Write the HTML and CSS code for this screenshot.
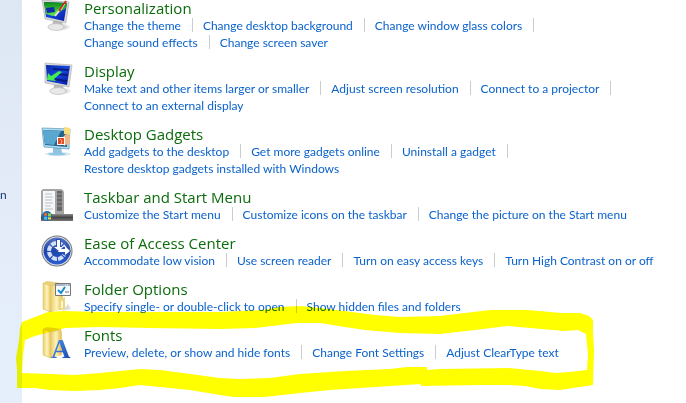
FILE: index.html
```html
<!DOCTYPE html>
<html lang="en">
<head>
<meta charset="utf-8">
<title>Control Panel</title>
<link rel="stylesheet" href="styles.css">
</head>
<body>
<div class="page">
<aside class="side"><span>n</span></aside>
<main class="main">
  <section class="item">
    <svg class="icon" viewBox="0 0 32 32" aria-hidden="true">
      <defs>
        <linearGradient id="frame" x2="1" y2="1"><stop stop-color="#999"/><stop offset=".5" stop-color="#eee"/><stop offset="1" stop-color="#aaa"/></linearGradient>
        <linearGradient id="screen" x2="1" y2="1"><stop stop-color="#0828a8"/><stop offset=".5" stop-color="#1647dc"/><stop offset="1" stop-color="#0516a0"/></linearGradient>
        <linearGradient id="grass" x2="0" y2="1"><stop stop-color="#0a8b12"/><stop offset="1" stop-color="#5fe05a"/></linearGradient>
        <linearGradient id="fold" x2="1"><stop stop-color="#e9cf70"/><stop offset=".5" stop-color="#fff3b8"/><stop offset="1" stop-color="#e3c35c"/></linearGradient>
        <radialGradient id="foot"><stop stop-color="#aaa"/><stop offset=".6" stop-color="#ddd"/><stop offset="1" stop-color="#ddd" stop-opacity="0"/></radialGradient>
      </defs>
      <ellipse cx="18" cy="27" rx="12" ry="4" fill="url(#foot)"/>
      <path d="M12 21h9l1 5-11 1z" fill="#b9b9b9"/><ellipse cx="15" cy="27" rx="8" ry="3.4" fill="#e8e8e8" stroke="#b5b5b5" stroke-width=".6"/>
      <path d="M1 0l27 2-3 21L4 19z" fill="#d9d9d9" stroke="#aaa" stroke-width=".6"/>
      <path d="M3 2l23 1-3 18L5 17z" fill="url(#screen)"/>
      <path d="M3 2l23 1-1 5-8 5-5 3-7-2z" fill="url(#grass)"/>
      <path d="M5 8l8-1 1 5-8 1z" fill="#102ca8"/><path d="M8 14l5-1 4-4 2 2-5 5z" fill="#55e04c"/>
      <path d="M25 1L18 11" stroke="#d9261c" stroke-width="2"/><path d="M18 11l-4 5" stroke="#f5ddd4" stroke-width="2"/><path d="M24 4l-4 6" stroke="#fff" stroke-width=".7"/>
    </svg>
    <div class="body">
      <h2><a href="#">Personalization</a></h2>
      <ul><li><a href="#">Change the theme</a></li><li><a href="#">Change desktop background</a></li><li><a href="#">Change window glass colors</a></li><li><a href="#">Change sound effects</a></li><li><a href="#">Change screen saver</a></li></ul>
    </div>
  </section>
  <section class="item">
    <svg class="icon" viewBox="0 0 32 32" aria-hidden="true">
      <ellipse cx="19" cy="28" rx="12" ry="4" fill="url(#foot)"/>
      <path d="M13 22h9l1 5-11 1z" fill="#b9b9b9"/><ellipse cx="17" cy="28" rx="8" ry="3.4" fill="#e8e8e8" stroke="#b5b5b5" stroke-width=".6"/>
      <path d="M4 0l27 2-3 22L4 20z" fill="#d9d9d9" stroke="#aaa" stroke-width=".6"/>
      <path d="M5 2l24 1-3 19L6 18z" fill="url(#screen)"/>
      <path d="M12 6l16 1M14 11l13 1M12 16l14 2" stroke="#06106a" stroke-width="2" opacity=".75"/>
      <path d="M18 8l3 1-8 7 2 2-9-1 1-7 3 3z" fill="#45eb52"/>
    </svg>
    <div class="body">
      <h2><a href="#">Display</a></h2>
      <ul><li><a href="#">Make text and other items larger or smaller</a></li><li><a href="#">Adjust screen resolution</a></li><li><a href="#">Connect to a projector</a></li><li><a href="#">Connect to an external display</a></li></ul>
    </div>
  </section>
  <section class="item">
    <svg class="icon" viewBox="0 0 32 32" aria-hidden="true">
      <ellipse cx="17" cy="28" rx="13" ry="2" fill="#d9e9f2"/>
      <path d="M12 21h8l1 6h-9z" fill="#8fc3e0"/><ellipse cx="16" cy="28" rx="9" ry="1.4" fill="#8fc6e3"/>
      <path d="M1 2l28 1-1 20-25-2z" fill="#b2dcf2" stroke="#5896b8" stroke-width=".7"/>
      <path d="M2 4l25 1-1 16-22-2z" fill="#26638a"/><path d="M2 4l18 1-7 14-9-1z" fill="#5aa7cf"/>
      <path d="M23 1l6 1v7l-6-1z" fill="#f7dc7a"/><path d="M21 12l4-4 4 2v7l-6 3z" fill="#efb68a"/>
      <path d="M16 11h8v8h-8z" fill="#fff"/><path d="M17 12h6v6h-6z" fill="#e64a27"/><path d="M19 13l2 2-1 3" stroke="#ffad8d" fill="none"/>
    </svg>
    <div class="body">
      <h2><a href="#">Desktop Gadgets</a></h2>
      <ul><li><a href="#">Add gadgets to the desktop</a></li><li><a href="#">Get more gadgets online</a></li><li><a href="#">Uninstall a gadget</a></li><li><a href="#">Restore desktop gadgets installed with Windows</a></li></ul>
    </div>
  </section>
  <section class="item">
    <svg class="icon" viewBox="0 0 32 32" aria-hidden="true">
      <defs><linearGradient id="bar" x2="0" y2="1"><stop stop-color="#8b8b8b"/><stop offset=".5" stop-color="#474747"/><stop offset="1" stop-color="#777"/></linearGradient></defs>
      <path d="M2 0h18q3 1 3 4v21H0V2z" fill="#a5a5a5"/><path d="M2 2h12v23H2z" fill="#f7f7f7"/>
      <path d="M4 5h7M4 8h8M4 11h7M4 14h8M4 17h6M4 20h8" stroke="#b7c0ce"/><path d="M16 2h5v20h-5z" fill="#666"/><path d="M16 5h5M16 9h5M16 13h5M16 17h5" stroke="#999"/>
      <path d="M0 25h32v7H0z" fill="url(#bar)"/><circle cx="6" cy="27" r="5" fill="#1c6fa9"/>
      <path d="M3 25q1-2 3-1v3q-2-1-3 0z" fill="#f06425"/><path d="M7 24q2 1 3 0v3q-2 1-3 0z" fill="#8fd34a"/><path d="M3 28q2-1 3 0v3q-2 0-3-1z" fill="#52b8f2"/><path d="M7 28q2 1 3 0v2q-2 1-3 0z" fill="#ffd744"/>
    </svg>
    <div class="body">
      <h2><a href="#">Taskbar and Start Menu</a></h2>
      <ul><li><a href="#">Customize the Start menu</a></li><li><a href="#">Customize icons on the taskbar</a></li><li><a href="#">Change the picture on the Start menu</a></li></ul>
    </div>
  </section>
  <section class="item">
    <svg class="icon" viewBox="0 0 32 32" aria-hidden="true">
      <defs><linearGradient id="ball" x2="0" y2="1"><stop stop-color="#5573bd"/><stop offset=".5" stop-color="#1c45ac"/><stop offset="1" stop-color="#2c5ccf"/></linearGradient></defs>
      <circle cx="16" cy="16" r="15.500" fill="#777"/><circle cx="16" cy="16" r="14.500" fill="#dde2ee"/><circle cx="16" cy="16" r="13.500" fill="url(#ball)"/>
      <circle cx="16" cy="16" r="8" fill="none" stroke="#d5e0f6" stroke-width="4" stroke-dasharray="5.083 1.200"/>
      <path d="M15 16V4h5v8h5l5 4-5 5z" fill="#2a52b3"/>
      <path d="M16 5h3v7h3l-4 4-5-4h3z" fill="#fff"/><path d="M19 14h5v-3l5 5-5 4v-3h-7z" fill="#fff"/>
    </svg>
    <div class="body">
      <h2><a href="#">Ease of Access Center</a></h2>
      <ul><li><a href="#">Accommodate low vision</a></li><li><a href="#">Use screen reader</a></li><li><a href="#">Turn on easy access keys</a></li><li><a href="#">Turn High Contrast on or off</a></li></ul>
    </div>
  </section>
  <section class="item">
    <svg class="icon" viewBox="0 0 32 32" aria-hidden="true">
      <path d="M21 30l9-2-3-5z" fill="#c7c7c7" opacity=".6"/><path d="M2 2l4-2 14 2 2 4v22l-13 3-7-3z" fill="#e8cf79"/><path d="M2 2l8 3v26l-8-3z" fill="url(#fold)" stroke="#d8bd61" stroke-width=".5"/><path d="M10 6l11-3v25l-11 3z" fill="url(#fold)"/><path d="M18 18l6-2v12l-6 1z" fill="#ecd67f"/><path d="M20 20h2v7h-2z" fill="#fff8d3"/>
      <path d="M14.500 2.500h15v12h-15z" fill="#f7fbff" stroke="#777"/><path d="M15 3h14v2H15z" fill="#a8b6c5"/><path d="M24 4h1M26 4h1" stroke="#fff"/><path d="M17 9l3 3 4-6" fill="none" stroke="#1689cf" stroke-width="2"/><path d="M24 11h4" stroke="#777"/>
    </svg>
    <div class="body">
      <h2><a href="#">Folder Options</a></h2>
      <ul><li><a href="#">Specify single- or double-click to open</a></li><li><a href="#">Show hidden files and folders</a></li></ul>
    </div>
  </section>
  <section class="item">
    <svg class="icon" viewBox="0 0 32 32" aria-hidden="true">
      <defs><linearGradient id="letter" x2="1" y2="1"><stop stop-color="#5aa2ee"/><stop offset="1" stop-color="#123fac"/></linearGradient></defs>
      <path d="M2 2l4-2 14 2 1 4v22l-12 3-7-3z" fill="#e8cf79"/><path d="M2 2l8 3v26l-8-3z" fill="url(#fold)" stroke="#d8bd61" stroke-width=".5"/><path d="M10 6l10-3v25l-10 3z" fill="url(#fold)"/>
      <text x="10" y="31" class="letter">A</text>
    </svg>
    <div class="body">
      <h2><a href="#">Fonts</a></h2>
      <ul><li><a href="#">Preview, delete, or show and hide fonts</a></li><li><a href="#">Change Font Settings</a></li><li><a href="#">Adjust ClearType text</a></li></ul>
    </div>
  </section>
</main>
<svg class="marker" width="600" height="403" viewBox="0 0 600 403" aria-hidden="true">
  <path fill="#ff0" fill-rule="evenodd" d="M17 388V370L16 358 19 340 20 328 22 322 35 317 48 312 63 311 100 312 220 312 263 310 280 307 300 306 320 308 352 312 375 315 400 317 440 316 465 313 490 310 527 310 562 313 580 313 589 316 593 320V332L594 350 593 385 573 388 560 390 540 389 525 386 507 385 480 385 421 386V384L360 388 330 390 300 393 265 397H234L220 395 190 390 160 387 140 385 120 388 100 390 75 391 50 390 35 388ZM22 373L23 355 25 340 35 336 50 332 65 328 100 327 150 328 220 329 255 328 280 325 297 323 320 323 345 327 365 330 400 333 440 334 475 330 507 326 530 328 565 331 578 330 586 334 588 355 587 370 570 372 555 373 540 371 509 368 440 369 427 370V367H407L390 369 345 371 300 374 270 378 240 379 220 378 190 374 160 370 140 369 120 371 100 373 75 375 50 374Z"/>
</svg>
</div>
</body>
</html>
```
FILE: styles.css
```css
* { box-sizing: border-box; }
body {
  margin: 0;
  background: #fff;
  font-family: Lato, "Open Sans", sans-serif;
  font-size: 12px;
  line-height: 17px;
}
.page {
  position: relative;
  display: flex;
  min-height: 100vh;
  overflow: hidden;
}
.side {
  flex: none;
  width: 22px;
  padding-top: 186px;
  color: #153a7a;
  background: linear-gradient(#dde7f4, #e4ebf8 50%, #e5effc);
}
.main {
  flex: 1;
  display: flex;
  flex-direction: column;
  gap: 12px;
  padding: 0 22px 0 19px;
}
.item { display: flex; gap: 11px; }
.icon {
  flex: none;
  width: 32px;
  height: 32px;
  overflow: visible;
}
.letter {
  font: bold 27px "Liberation Serif", serif;
  fill: url(#letter);
}
.body { flex: 1; }
h2 {
  margin: 0;
  font-family: "Open Sans", "Noto Sans", sans-serif;
  font-size: 15px;
  font-weight: 400;
  line-height: 17px;
}
a { color: #0a62cc; text-decoration: none; }
h2 a { color: #0b6c0b; }
ul {
  display: flex;
  flex-wrap: wrap;
  margin: 0;
  padding: 0;
  list-style: none;
}
li { display: flex; white-space: nowrap; }
li:not(:last-child)::after {
  content: "";
  width: 1px;
  height: 14px;
  margin: 1px 10px 0 11px;
  background: #ccc;
}
.marker {
  position: absolute;
  top: 0;
  left: 0;
  mix-blend-mode: multiply;
  pointer-events: none;
}
```
